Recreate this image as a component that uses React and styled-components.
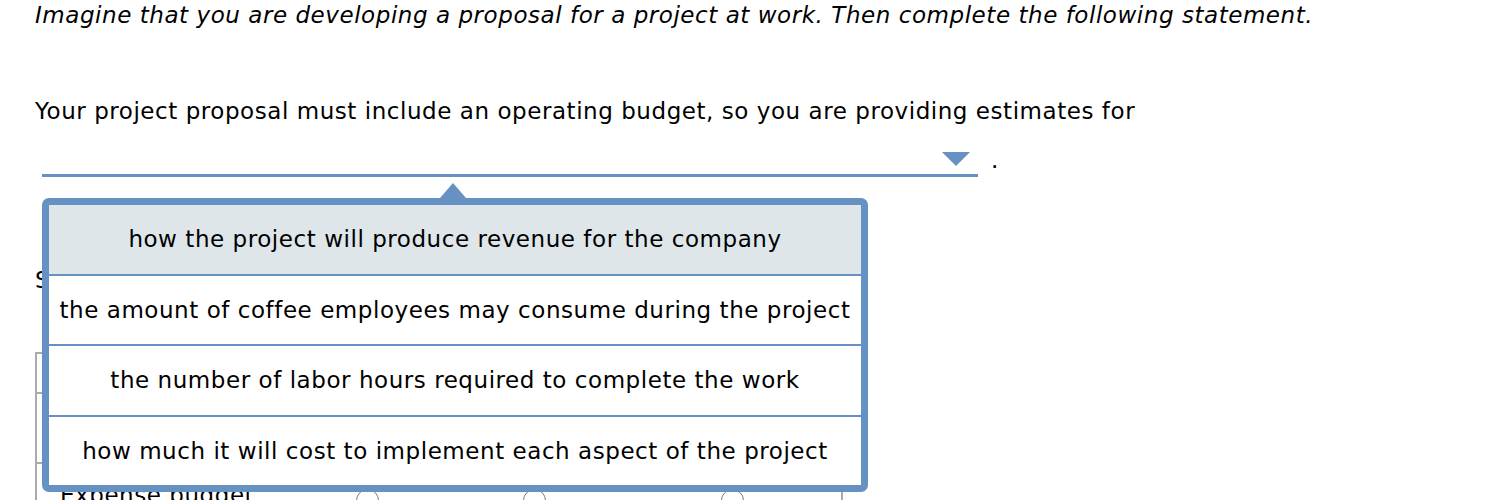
import React from "react";
import styled, { createGlobalStyle } from "styled-components";

const BLUE = "#6591c3";

const Global = createGlobalStyle`
  html, body { margin: 0; padding: 0; background: #fff; }
  body {
    font-family: "DejaVu Sans", Verdana, sans-serif;
    font-size: 23px;
    letter-spacing: 0.55px;
    color: #000;
    overflow: hidden;
  }
`;

const Page = styled.div`
  width: 1490px;
  height: 500px;
  padding: 2px 0 0 35px;
  box-sizing: border-box;
  overflow: hidden;
`;

const Prompt = styled.p`
  margin: 0;
  font-style: italic;
  line-height: 27px;
  white-space: nowrap;
`;

const Statement = styled.p`
  margin: 69px 0 0;
  line-height: 27px;
  white-space: nowrap;
`;

const BlankRow = styled.div`
  display: flex;
  align-items: flex-end;
  gap: 13px;
  margin: 22px 0 0 7px;
`;

const SelectWrap = styled.div`
  position: relative;
  width: 936px;
`;

const SelectBox = styled.div`
  height: 22px;
  border-bottom: 3px solid ${BLUE};
  display: flex;
  justify-content: flex-end;
  align-items: flex-start;
  padding: 5px 8px 0 0;
`;

const Caret = styled.span`
  width: 0;
  height: 0;
  border-left: 14px solid transparent;
  border-right: 14px solid transparent;
  border-top: 14px solid ${BLUE};
`;

const Period = styled.span`
  line-height: 27px;
  padding-bottom: 3px;
`;

const Menu = styled.div`
  position: absolute;
  top: 51px;
  left: 0;
  width: 826px;
  box-sizing: border-box;
  border: 7px solid ${BLUE};
  border-radius: 7px;
  background: #fff;
  z-index: 5;
  display: flex;
  flex-direction: column;
`;

const Pointer = styled.span`
  position: absolute;
  top: -22px;
  left: 391px;
  width: 0;
  height: 0;
  border-left: 13px solid transparent;
  border-right: 13px solid transparent;
  border-bottom: 15px solid ${BLUE};
`;

const Option = styled.div`
  height: 68.5px;
  display: flex;
  align-items: center;
  justify-content: center;
  text-align: center;
  white-space: nowrap;
  background: ${(p) => (p.$active ? "#dfe6e9" : "#fff")};
  & + & {
    border-top: 2px solid ${BLUE};
  }
`;

const Instruction = styled.p`
  margin: 90px 0 0;
  line-height: 27px;
`;

const Table = styled.div`
  margin-top: 58px;
  width: 808px;
  box-sizing: border-box;
  border: 2px solid #aaa;
  border-bottom: none;
  display: grid;
  grid-template-columns: 253px 154px 180px 1fr;
`;

const LabelCell = styled.div`
  border-bottom: 2px solid #aaa;
  height: ${(p) => p.$h}px;
  box-sizing: border-box;
  display: flex;
  align-items: center;
  padding: 0 0 6px 23px;
  white-space: nowrap;
`;

const RadioCell = styled.div`
  border-bottom: 2px solid #aaa;
  height: ${(p) => p.$h}px;
  box-sizing: border-box;
  display: flex;
  align-items: flex-start;
  justify-content: center;
  padding-top: 25px;
`;

const Radio = styled.span`
  width: 21px;
  height: 21px;
  border-radius: 50%;
  border: 1.5px solid #7a7a7a;
`;

const options = [
  "how the project will produce revenue for the company",
  "the amount of coffee employees may consume during the project",
  "the number of labor hours required to complete the work",
  "how much it will cost to implement each aspect of the project",
];

const rows = [
  { label: "", h: 40, header: true },
  { label: "Revenue budget", h: 70 },
  { label: "Expense budget", h: 70 },
];

export default function App() {
  return (
    <>
      <Global />
      <Page>
        <Prompt>
          Imagine that you are developing a proposal for a project at work. Then
          complete the following statement.
        </Prompt>
        <Statement>
          Your project proposal must include an operating budget, so you are
          providing estimates for
        </Statement>
        <BlankRow>
          <SelectWrap>
            <SelectBox>
              <Caret />
            </SelectBox>
            <Menu>
              <Pointer />
              {options.map((o, i) => (
                <Option key={o} $active={i === 0}>
                  {o}
                </Option>
              ))}
            </Menu>
          </SelectWrap>
          <Period>.</Period>
        </BlankRow>
        <Instruction>Select the type of budget for each item.</Instruction>
        <Table>
          {rows.map((r, ri) => (
            <React.Fragment key={ri}>
              <LabelCell $h={r.h}>{r.label}</LabelCell>
              {[0, 1, 2].map((c) => (
                <RadioCell key={c} $h={r.h}>
                  {!r.header && <Radio />}
                </RadioCell>
              ))}
            </React.Fragment>
          ))}
        </Table>
      </Page>
    </>
  );
}
